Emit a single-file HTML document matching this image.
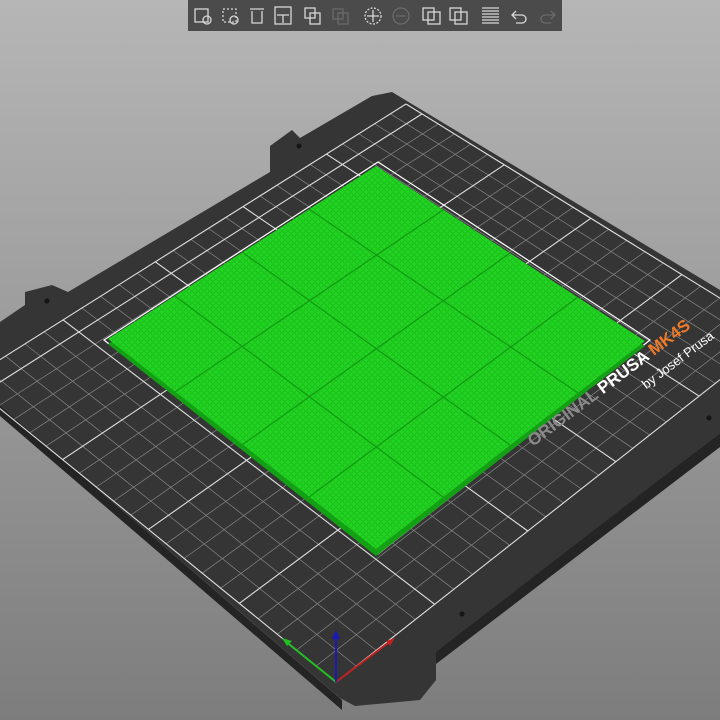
<!DOCTYPE html>
<html><head><meta charset="utf-8"><style>
html,body{margin:0;padding:0;width:720px;height:720px;overflow:hidden}
body{background:linear-gradient(#b6b6b6,#7d7d7d);font-family:"Liberation Sans",sans-serif}
svg{position:absolute;left:0;top:0}
</style></head><body>
<svg width="720" height="720" viewBox="0 0 720 720">
<defs>
<pattern id="tex" width="6" height="6" patternUnits="userSpaceOnUse">
<rect width="6" height="6" fill="#22d422"/>
<circle cx="3" cy="3" r="2.2" fill="none" stroke="#17b017" stroke-width="0.7"/>
</pattern>
</defs>
<polygon fill="#242424" points="720,433 436,650 436,664 720,447"/>
<polygon fill="#242424" points="0,405 342,700 342,710 0,416"/>
<polygon fill="#353535" points="372,96 392,92 720,290 720,433 436,652 436,680 420,700 355,706 340,698 0,405 0,322 25,305 25,292 52,285 68,292 270,172 270,146 292,130 300,138 372,96"/>
<circle cx="299" cy="146" r="2.5" fill="#151515"/><circle cx="47" cy="301" r="2.5" fill="#151515"/>
<circle cx="462" cy="614" r="2.5" fill="#151515"/><circle cx="709" cy="418" r="2.5" fill="#151515"/>
<g id="grid"></g>
<polygon points="104,340 378,162 650,340 378,554" fill="none" stroke="#fff" stroke-width="1.2"/>
<polygon points="108,344 376,171 645,346 376,556" fill="#14a014"/>
<polygon points="376,166 645,341 376,549 108,339" fill="url(#tex)"/>
<g stroke="#119a11" stroke-width="1.2" fill="none">
<path d="M309,209L578,393M242,252L510,445M175,296L443,497M443,210L175,392M510,253L242,445M578,297L309,497"/>
</g>
<g transform="translate(533,447) rotate(-37)" font-weight="bold" font-size="17">
<text x="0" y="0" fill="#8a8a8a">ORIGINAL <tspan fill="#fff">PRUSA</tspan> <tspan fill="#ee7a2a">MK4S</tspan></text>
<text x="125" y="22" fill="#fff" font-size="13" font-weight="normal">by Josef Prusa</text>
</g>
<g stroke-width="2">
<line x1="336" y1="682" x2="285" y2="641" stroke="#22c022"/>
<line x1="336" y1="682" x2="392" y2="640" stroke="#c02020"/>
<line x1="336" y1="682" x2="336" y2="636" stroke="#1a1ab8"/>
</g>
<polygon points="282,638 292,641 287,646" fill="#22c022"/>
<polygon points="395,638 386,641 390,646" fill="#c02020"/>
<polygon points="336,630 332,639 340,639" fill="#1a1ab8"/>
<rect x="188" y="0" width="374" height="31" fill="#4b4b4b"/>
<g stroke="#d8d8d8" stroke-width="1.3" fill="none">
<rect x="195" y="9" width="13" height="13"/><circle cx="207" cy="20" r="4"/>
<rect x="223" y="9" width="13" height="13" stroke-dasharray="2 2"/><circle cx="234" cy="20" r="4"/>
<path d="M250,9h14M252,11v12h10v-12"/>
<rect x="275" y="7" width="16" height="17"/><path d="M277,15h12M283,15v8"/>
<rect x="305" y="8" width="10" height="10"/><rect x="310" y="13" width="10" height="11"/>
<circle cx="373" cy="16" r="8" stroke-dasharray="2 1.5"/><path d="M367,16h12M373,10v12"/>
<rect x="423" y="8" width="11" height="12"/><rect x="428" y="12" width="12" height="12"/>
<rect x="450" y="8" width="11" height="12"/><rect x="455" y="12" width="12" height="12"/>
<path d="M482,8h17M482,11h17M482,14h17M482,17h17M482,20h17M482,23h17"/>
<path d="M516,11l-4,4 4,4M512,15h10a4,4 0 0 1 0,8h-6"/>
</g>
<g stroke="#6a6a6a" stroke-width="1.3" fill="none">
<rect x="333" y="9" width="10" height="10"/><rect x="338" y="13" width="10" height="11"/>
<circle cx="401" cy="16" r="8"/><path d="M396,16h10"/>
<path d="M551,11l4,4-4,4M555,15h-10a4,4 0 0 0 0,8h6"/>
</g>
</svg>
<script>
(function(){
// homography: (x mm, y mm) -> screen
var src=[[0,0],[0,210],[250,0],[250,210]], dst=[[336,682],[-34,381],[778,334],[406,104]];
var A=[],b=[];
for(var i=0;i<4;i++){var x=src[i][0],y=src[i][1],X=dst[i][0],Y=dst[i][1];
 A.push([x,y,1,0,0,0,-x*X,-y*X]);b.push(X);
 A.push([0,0,0,x,y,1,-x*Y,-y*Y]);b.push(Y);}
var n=8;
for(var c=0;c<n;c++){var p=c;for(var r=c+1;r<n;r++)if(Math.abs(A[r][c])>Math.abs(A[p][c]))p=r;
 var t=A[c];A[c]=A[p];A[p]=t;t=b[c];b[c]=b[p];b[p]=t;
 for(var r=0;r<n;r++){if(r==c)continue;var f=A[r][c]/A[c][c];
  for(var k=c;k<n;k++)A[r][k]-=f*A[c][k];b[r]-=f*b[c];}}
var h=[];for(var i=0;i<n;i++)h.push(b[i]/A[i][i]);
function P(x,y){var w=h[6]*x+h[7]*y+1;return [((h[0]*x+h[1]*y+h[2])/w).toFixed(1),((h[3]*x+h[4]*y+h[5])/w).toFixed(1)];}
function seg(a,c){return 'M'+a[0]+','+a[1]+'L'+c[0]+','+c[1];}
var minor='',major='';
for(var x=0;x<=250;x+=10){var s=seg(P(x,0),P(x,210));if(x%50==0||x==250)major+=s;else minor+=s;}
for(var y=0;y<=210;y+=10){var s=seg(P(0,y),P(250,y));if(y%50==0||y==210)major+=s;else minor+=s;}
document.getElementById('grid').innerHTML='<path d="'+minor+'" stroke="#858585" stroke-width="0.7" fill="none"/><path d="'+major+'" stroke="#e0e0e0" stroke-width="1.1" fill="none"/>';
})();
</script>
</body></html>
